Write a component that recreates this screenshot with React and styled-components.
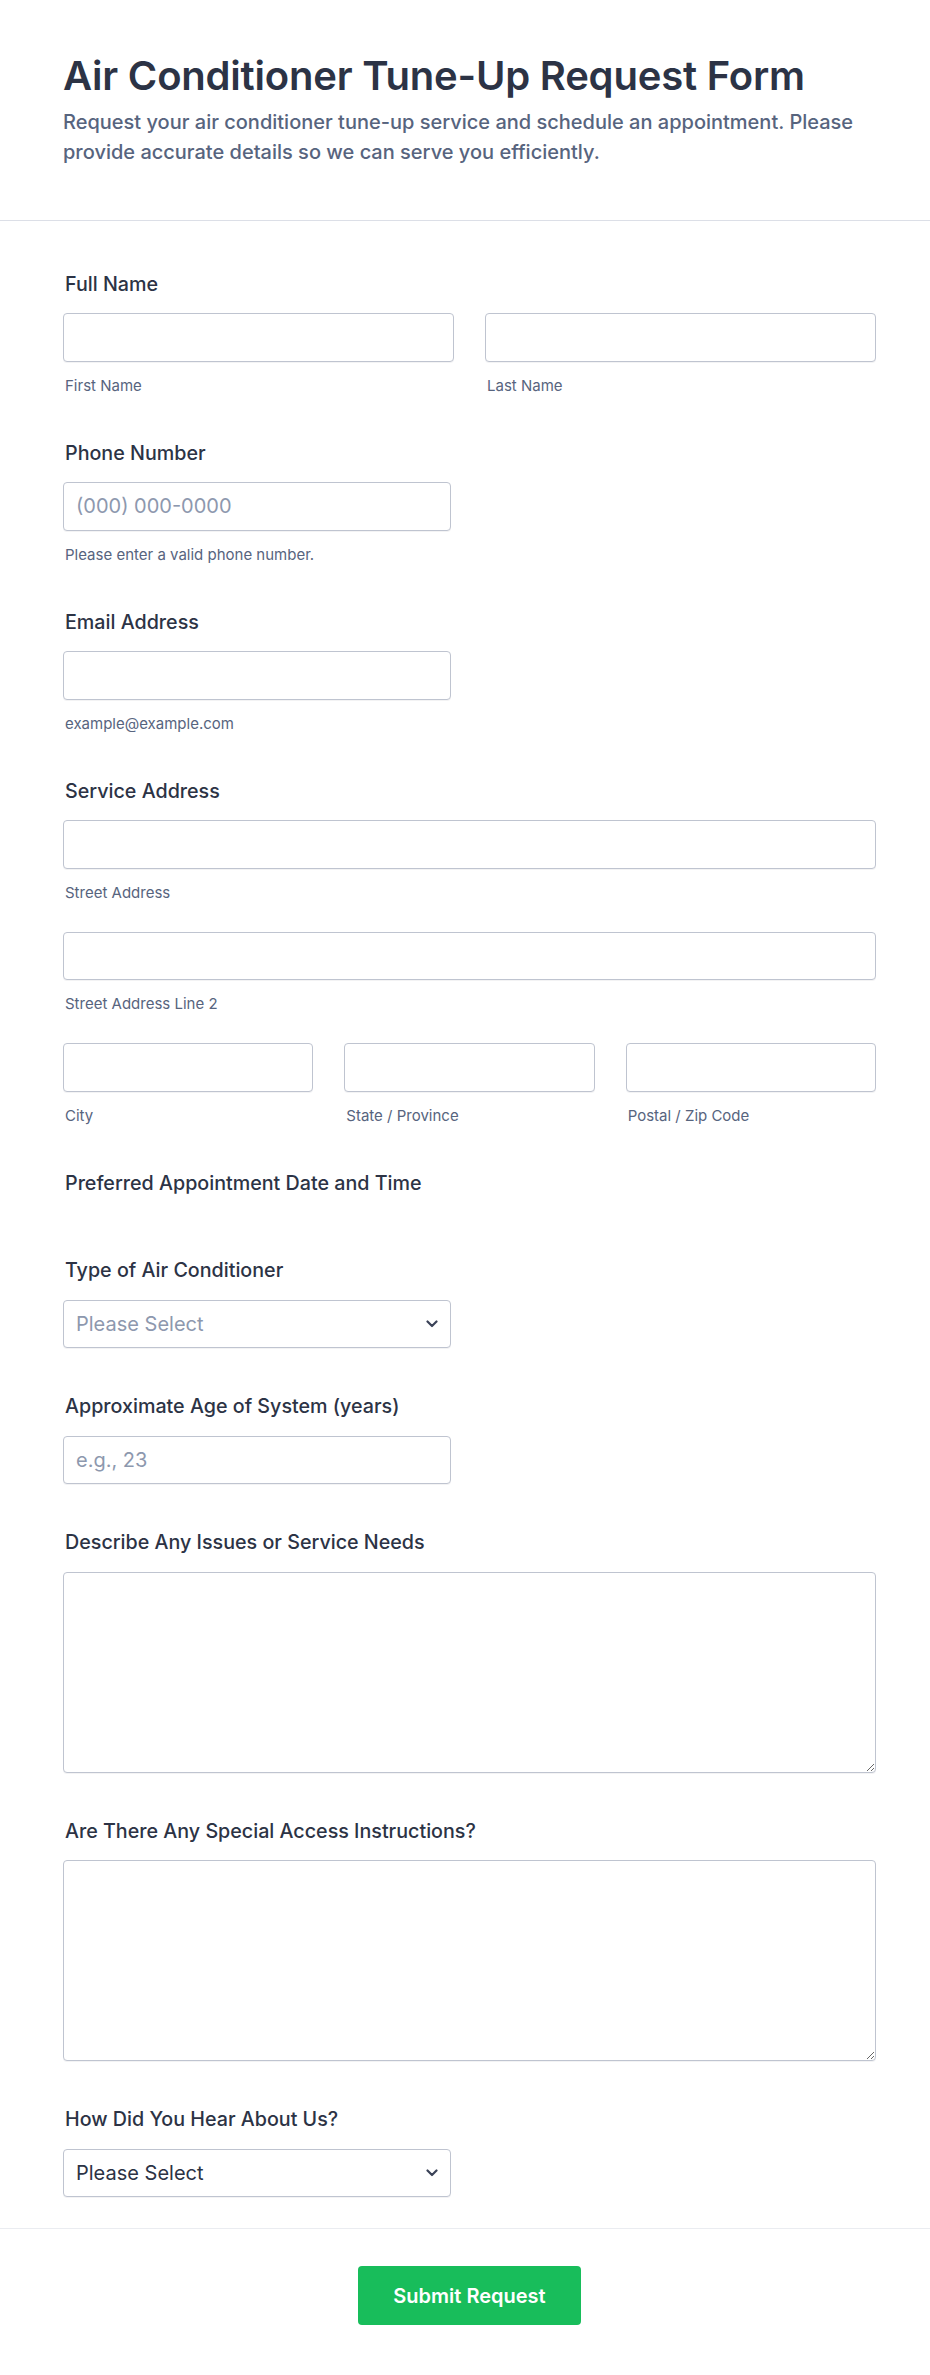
import React from 'react';
import { styled, createGlobalStyle } from 'styled-components';

const GlobalStyle = createGlobalStyle`
    * {
        box-sizing: border-box;
    }
    body {
        margin: 0;
        background: #ffffff;
        font-family: Inter, 'Noto Sans', 'Liberation Sans', sans-serif;
        color: #2c3345;
    }
`;

const Chevron = () => (
    <ChevronIcon width="12" height="8" viewBox="0 0 12 8" fill="none">
        <path
            d="M1.5 1.5 L6 6 L10.5 1.5"
            stroke="#3b4358"
            strokeWidth="2.2"
            strokeLinecap="round"
            strokeLinejoin="round"
        />
    </ChevronIcon>
);

const SelectField = ({ options, muted }) => (
    <SelectWrap>
        <Select defaultValue="" $muted={muted}>
            <option value="">Please Select</option>
            {options.map((o) => (
                <option key={o} value={o}>
                    {o}
                </option>
            ))}
        </Select>
        <Chevron />
    </SelectWrap>
);

const App = () => {
    return (
        <>
            <GlobalStyle />
            <Page>
                <Header>
                    <Title>Air Conditioner Tune-Up Request Form</Title>
                    <Subtitle>
                        Request your air conditioner tune-up service and schedule an
                        appointment. Please provide accurate details so we can serve
                        you efficiently.
                    </Subtitle>
                </Header>

                <Body>
                    <Field>
                        <Label>Full Name</Label>
                        <Row $cols={2}>
                            <div>
                                <Input type="text" />
                                <SubLabel>First Name</SubLabel>
                            </div>
                            <div>
                                <Input type="text" />
                                <SubLabel>Last Name</SubLabel>
                            </div>
                        </Row>
                    </Field>

                    <Field>
                        <Label>Phone Number</Label>
                        <Half>
                            <Input type="tel" placeholder="(000) 000-0000" />
                            <SubLabel>Please enter a valid phone number.</SubLabel>
                        </Half>
                    </Field>

                    <Field>
                        <Label>Email Address</Label>
                        <Half>
                            <Input type="email" />
                            <SubLabel>example@example.com</SubLabel>
                        </Half>
                    </Field>

                    <Field>
                        <Label>Service Address</Label>
                        <AddressStack>
                            <div>
                                <Input type="text" />
                                <SubLabel>Street Address</SubLabel>
                            </div>
                            <div>
                                <Input type="text" />
                                <SubLabel>Street Address Line 2</SubLabel>
                            </div>
                            <Row $cols={3}>
                                <div>
                                    <Input type="text" />
                                    <SubLabel>City</SubLabel>
                                </div>
                                <div>
                                    <Input type="text" />
                                    <SubLabel>State / Province</SubLabel>
                                </div>
                                <div>
                                    <Input type="text" />
                                    <SubLabel>Postal / Zip Code</SubLabel>
                                </div>
                            </Row>
                        </AddressStack>
                    </Field>

                    <Field>
                        <Label>Preferred Appointment Date and Time</Label>
                    </Field>

                    <Field>
                        <Label>Type of Air Conditioner</Label>
                        <Half>
                            <SelectField
                                muted
                                options={['Central Air', 'Split System', 'Window Unit', 'Heat Pump']}
                            />
                        </Half>
                    </Field>

                    <Field>
                        <Label>Approximate Age of System (years)</Label>
                        <Half>
                            <Input type="number" placeholder="e.g., 23" />
                        </Half>
                    </Field>

                    <Field>
                        <Label>Describe Any Issues or Service Needs</Label>
                        <TextArea />
                    </Field>

                    <Field>
                        <Label>Are There Any Special Access Instructions?</Label>
                        <TextArea />
                    </Field>

                    <Field>
                        <Label>How Did You Hear About Us?</Label>
                        <Half>
                            <SelectField
                                options={['Google', 'Friend or Family', 'Social Media', 'Other']}
                            />
                        </Half>
                    </Field>
                </Body>

                <Footer>
                    <SubmitButton type="button">Submit Request</SubmitButton>
                </Footer>
            </Page>
        </>
    );
};

export default App;

const Page = styled.div`
    width: 930px;
    min-height: 2375px;
    background: #ffffff;
`;

const Header = styled.header`
    padding: 52px 54px 53px 63px;
    border-bottom: 1px solid #dcdfe7;
`;

const Title = styled.h1`
    margin: 0;
    font-size: 40px;
    line-height: 48px;
    font-weight: 600;
    color: #2c3345;
    letter-spacing: -0.2px;
`;

const Subtitle = styled.p`
    margin: 7px 0 0;
    font-size: 20px;
    line-height: 30px;
    font-weight: 500;
    color: #57647e;
`;

const Body = styled.div`
    display: flex;
    flex-direction: column;
    gap: 43px;
    padding: 47.5px 54px 31px 63px;
`;

const Field = styled.div`
    display: flex;
    flex-direction: column;
`;

const Label = styled.label`
    display: block;
    margin: 0 0 14.5px 2px;
    font-size: 19.7px;
    line-height: 30px;
    font-weight: 500;
    color: #2c3345;
`;

const Row = styled.div`
    display: grid;
    grid-template-columns: repeat(${(p) => p.$cols}, 1fr);
    column-gap: 31px;
`;

const Half = styled.div`
    width: 388px;
`;

const AddressStack = styled.div`
    display: flex;
    flex-direction: column;
    gap: 30px;
`;

const Input = styled.input`
    display: block;
    width: 100%;
    height: 48.5px;
    padding: 0 12px;
    border: 1px solid #bfc4d0;
    border-radius: 4px;
    box-shadow: 0 1px 0 rgba(44, 51, 69, 0.06);
    background: #ffffff;
    font-family: inherit;
    font-size: 20px;
    color: #2c3345;
    outline: none;

    &::placeholder {
        color: #8d98ae;
    }

    &::-webkit-outer-spin-button,
    &::-webkit-inner-spin-button {
        -webkit-appearance: none;
        margin: 0;
    }
    -moz-appearance: textfield;
`;

const SubLabel = styled.div`
    margin: 15px 0 0 2px;
    font-size: 15px;
    line-height: 18px;
    color: #57647e;
`;

const SelectWrap = styled.div`
    position: relative;
    width: 100%;
`;

const Select = styled.select`
    display: block;
    width: 100%;
    height: 48.5px;
    padding: 0 40px 0 12px;
    border: 1px solid #bfc4d0;
    border-radius: 4px;
    box-shadow: 0 1px 0 rgba(44, 51, 69, 0.06);
    background: #ffffff;
    appearance: none;
    -webkit-appearance: none;
    font-family: inherit;
    font-size: 20px;
    color: ${(p) => (p.$muted ? '#8d98ae' : '#2c3345')};
    outline: none;
`;

const ChevronIcon = styled.svg`
    position: absolute;
    right: 13px;
    top: 50%;
    transform: translateY(-50%);
    pointer-events: none;
`;

const TextArea = styled.textarea`
    display: block;
    width: 100%;
    height: 201px;
    padding: 12px;
    border: 1px solid #bfc4d0;
    border-radius: 4px;
    box-shadow: 0 1px 0 rgba(44, 51, 69, 0.06);
    font-family: inherit;
    font-size: 20px;
    color: #2c3345;
    resize: vertical;
    outline: none;
`;

const Footer = styled.div`
    display: flex;
    justify-content: center;
    padding: 37px 54px 50px 63px;
    border-top: 1px solid #eaecf1;
`;

const SubmitButton = styled.button`
    width: 223px;
    height: 59px;
    border: none;
    border-radius: 4px;
    background: #18bd5b;
    color: #ffffff;
    font-family: inherit;
    font-size: 20px;
    font-weight: 600;
    cursor: pointer;
`;
